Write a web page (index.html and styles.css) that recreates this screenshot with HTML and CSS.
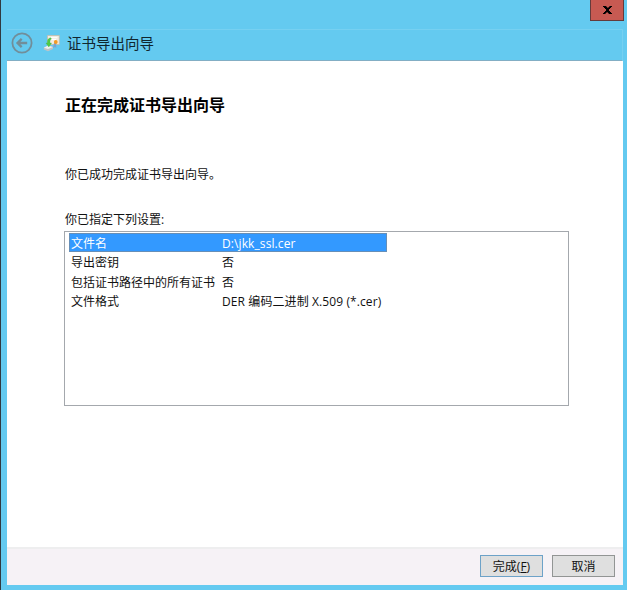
FILE: index.html
```html
<!DOCTYPE html>
<html lang="zh-CN">
<head>
<meta charset="utf-8">
<title>证书导出向导</title>
<link rel="stylesheet" href="styles.css">
</head>
<body>
<div class="window">
  <div class="titlebar">
    <button class="close" aria-label="关闭"><svg width="10" height="8" viewBox="0 0 10 8"><path d="M0 0h3.4v1h1v1h1V1h1V0H9v1H8v1H7v1H6v2h1v1h1v1h1v1H5.6V7h-1V6h-1v1h-1v1H0V7h1V6h1V5h1V3H2V2H1V1H0z"/></svg></button>
  </div>
  <header class="header">
    <svg class="back" width="22" height="22" viewBox="0 0 22 22"><circle cx="11" cy="11" r="9.6"/><path d="M16.2 11H6.8M10.7 6.9L6.5 11l4.2 4.1"/></svg>
    <svg class="cert" width="17" height="17" viewBox="0 0 17 17">
      <path d="M4.5.5h11.8v9H4.5z" fill="#f1ece2" stroke="#c3bda9" stroke-width=".8"/>
      <path d="M7.5 2.7h6.8M9 4.5h4" stroke="#fff"/>
      <path d="M11 8l-1 5 2-1 1.2 1V8z" fill="#7ba3cf"/>
      <circle cx="12.8" cy="7" r="1.9" fill="#f39a20"/>
      <path d="M.8 12.7l4.2-2.2 5 1.5v2l-5 2.2-4.2-1.8z" fill="#bfc4c7"/>
      <path d="M.8 12.7l4.2-2.2 5 1.5-5 2z" fill="#eef0f0"/>
      <path d="M7.5 2.8C4.9 3.3 4.3 5.2 4.5 8H3l2.8 4 2.8-4H7c-.2-2 .1-3.4 1.4-4.5z" fill="#4ecb45" stroke="#38aa3c" stroke-width=".3"/>
    </svg>
    <span class="title">证书导出向导</span>
  </header>
  <main class="page">
    <h1>正在完成证书导出向导</h1>
    <p class="done">你已成功完成证书导出向导。</p>
    <p class="label">你已指定下列设置:</p>
    <div class="list">
      <div class="row selected"><span>文件名</span><span class="value">D:\jkk_ssl.cer</span></div>
      <div class="row"><span>导出密钥</span><span class="value">否</span></div>
      <div class="row"><span>包括证书路径中的所有证书</span><span class="value">否</span></div>
      <div class="row"><span>文件格式</span><span class="value">DER 编码二进制 X.509 (*.cer)</span></div>
    </div>
  </main>
  <footer class="footer">
    <button class="btn primary">完成(<u>F</u>)</button>
    <button class="btn">取消</button>
  </footer>
</div>
</body>
</html>
```
FILE: styles.css
```css
* { box-sizing: border-box; }
body {
  margin: 0;
  font: 12px/19px "Open Sans", "Noto Sans CJK SC", sans-serif;
  color: #111;
}
h1, p {
  margin: 0;
  padding-left: 1px;
}
.window {
  display: flex;
  flex-direction: column;
  width: 627px;
  height: 590px;
  padding: 0 4px 5px 6px;
  border-left: 1px solid #303940;
  background: #64caf0;
}
.titlebar {
  display: flex;
  justify-content: flex-end;
  height: 29px;
}
.close {
  display: flex;
  align-items: center;
  justify-content: center;
  width: 34px;
  height: 21px;
  margin-right: -1px;
  padding: 0 0 0 1px;
  border: 1px solid #653b3b;
  border-top: 0;
  background: #c75a52;
}
.header {
  display: flex;
  align-items: center;
  height: 32px;
  padding: 0 0 5px 4px;
  border: solid #76d0f1;
  border-width: 1px 1px 0 0;
  box-shadow: inset 0 -1px #83aec4;
}
.back {
  fill: none;
  stroke: #718e9a;
  stroke-width: 1.8;
}
.back path { stroke-width: 2.3; }
.cert { margin-left: 10px; }
.title {
  margin-left: 7px;
  font-size: 14.5px;
  line-height: 17px;
  color: #10262e;
}
.page {
  flex: 1;
  padding: 33px 54px 0 57px;
  background: #fff;
}
h1 {
  font-size: 16px;
  line-height: 22px;
  font-weight: 700;
  color: #000;
}
.done { margin-top: 49px; }
.label { margin-top: 26px; }
.list {
  height: 175px;
  margin-top: 2px;
  padding: 1px 3px 1px 4px;
  border: 1px solid #a4a8ad;
}
.row {
  display: grid;
  grid-template-columns: 151px 1fr;
  width: 318px;
  height: 19.3px;
  padding-left: 2px;
  line-height: 21px;
  white-space: nowrap;
}
.value { letter-spacing: .1px; }
.selected {
  background: #3399ff;
  color: #fff;
  box-shadow: inset 0 0 0 1px #668fb8;
}
.footer {
  display: flex;
  justify-content: flex-end;
  gap: 9px;
  height: 38px;
  padding: 6px 8px 0 0;
  border-top: 2px solid #eeeeef;
  background: #f6f2f6;
}
.btn {
  width: 63px;
  height: 22px;
  padding: 0;
  border: 1px solid #929594;
  background: #dfdfdf;
  font: inherit;
  line-height: 19px;
  color: #111;
}
.primary { border-color: #6da2c8; }
```
